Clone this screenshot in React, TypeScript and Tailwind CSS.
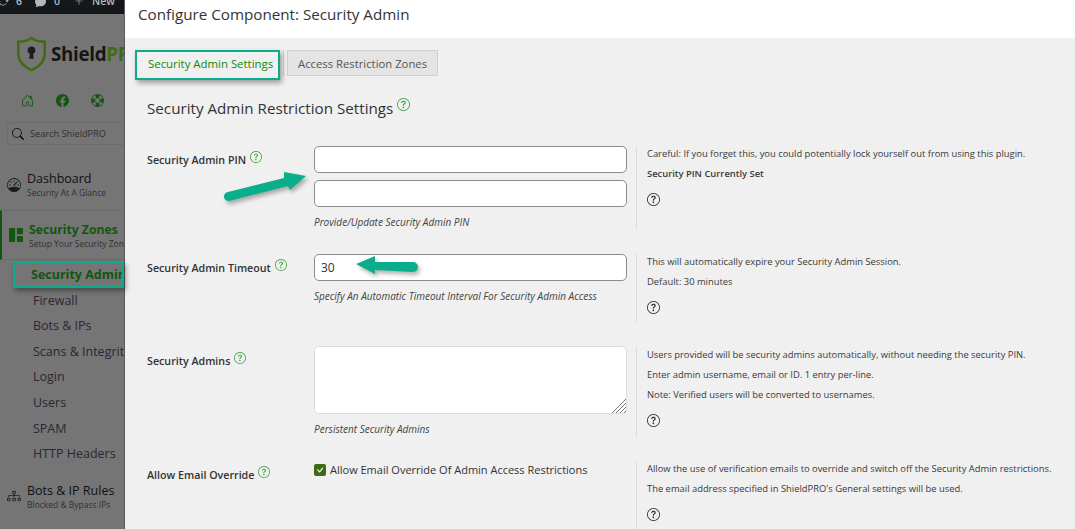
import {
  BsDiagram3,
  BsFacebook,
  BsGrid1X2Fill,
  BsHouseDoor,
  BsLifePreserver,
  BsPlusLg,
  BsQuestionCircle,
  BsSearch,
  BsSpeedometer,
  BsChatFill,
  BsArrowRepeat,
  BsCheck,
} from "react-icons/bs";

const subItems = ["Firewall", "Bots & IPs", "Scans & Integrity", "Login", "Users", "SPAM", "HTTP Headers"];

function Shield() {
  return (
    <svg viewBox="0 0 32 38" className="h-[36px] w-[31px] shrink-0">
      <path
        d="M16 2 C20 5 25 6 30 6 L30 18 C30 27 23 33 16 36 C9 33 2 27 2 18 L2 6 C7 6 12 5 16 2 Z"
        fill="none"
        stroke="#3f6b12"
        strokeWidth="2.6"
      />
      <circle cx="16" cy="15" r="4" fill="#1c1c1c" />
      <path d="M14.6 17 h2.8 l1 7 h-4.8 Z" fill="#1c1c1c" />
    </svg>
  );
}

function Sidebar() {
  return (
    <aside className="flex h-full w-[125px] shrink-0 flex-col overflow-hidden border-r border-[#5a5a5a] bg-[#757575] font-['Open_Sans',sans-serif]">
      <div className="flex h-[14px] shrink-0 items-end overflow-hidden bg-[#14181b] text-[10.5px] font-semibold leading-[18px] whitespace-nowrap text-[#b5b8ba]">
        <div className="flex translate-y-[-4px] items-center">
          <BsArrowRepeat className="ml-[-3px] w-[12px] shrink-0 text-[12px]" />
          <span className="ml-[7px] w-[19px]">6</span>
          <BsChatFill className="w-[11px] shrink-0 text-[11px]" />
          <span className="ml-[8px] w-[20px]">0</span>
          <BsPlusLg className="w-[10px] shrink-0 text-[10px]" />
          <span className="ml-[8px]">New</span>
          <span className="ml-[12px]">S</span>
        </div>
      </div>

      <div className="mt-[22px] ml-[16px] flex w-[140px] items-center gap-[4px]">
        <Shield />
        <span className="text-[18.8px] font-bold tracking-[-0.3px] text-[#161616]">
          Shield<span className="text-[#3f6b12]">PRO</span>
        </span>
      </div>

      <div className="mt-[22px] ml-[21px] flex gap-[22px] text-[13px] text-[#14560f]">
        <BsHouseDoor />
        <BsFacebook />
        <BsLifePreserver />
      </div>

      <div className="mt-[15px] ml-[7px] flex h-[23px] w-[130px] items-center gap-[6px] rounded-l-[4px] border border-[#6c6c6c] pl-[4px] text-[#111]">
        <BsSearch className="text-[12px]" />
        <span className="text-[9.2px] text-[#303030]">Search ShieldPRO</span>
      </div>

      <div className="mt-[25px] flex items-center whitespace-nowrap">
        <BsSpeedometer className="ml-[7px] shrink-0 text-[14px] text-[#1c1c1c]" />
        <div className="ml-[6px]">
          <div className="text-[12.5px] leading-[17px] text-[#111]">Dashboard</div>
          <div className="text-[8.5px] leading-[12px] text-[#303030]">Security At A Glance</div>
        </div>
      </div>

      <div className="mt-[11px] flex h-[50px] w-[130px] shrink-0 items-center border-y border-l-2 border-y-[#6c6c6c] border-l-[#14560f] whitespace-nowrap">
        <BsGrid1X2Fill className="ml-[7px] shrink-0 text-[14px] text-[#14560f]" />
        <div className="ml-[6px]">
          <div className="text-[12.2px] leading-[17px] font-bold text-[#14560f]">Security Zones</div>
          <div className="text-[8.5px] leading-[12px] text-[#303030]">Setup Your Security Zones</div>
        </div>
      </div>

      <div className="mt-[2px] flex flex-col pl-[33px] text-[12.5px] leading-[25.6px] whitespace-nowrap text-[#2c2634]">
        <span className="ml-[-2px] font-bold text-[#14560f]">Security Admin</span>
        {subItems.map((item) => (
          <span key={item}>{item}</span>
        ))}
      </div>

      <div className="mt-[15px] flex items-center whitespace-nowrap">
        <BsDiagram3 className="ml-[7px] shrink-0 text-[14px] text-[#1c1c1c]" />
        <div className="ml-[6px]">
          <div className="text-[12.5px] leading-[17px] text-[#111]">Bots &amp; IP Rules</div>
          <div className="text-[8.5px] leading-[12px] text-[#303030]">Blocked &amp; Bypass IPs</div>
        </div>
      </div>
    </aside>
  );
}

function Tip() {
  return <BsQuestionCircle className="ml-[4px] inline-block align-[1px] text-[12px] text-[#2f9e2f]" />;
}

type RowProps = {
  label: string;
  hint?: string;
  help: React.ReactNode[];
  height: string;
  children: React.ReactNode;
};

function Row({ label, hint, help, height, children }: RowProps) {
  return (
    <div className={`flex ${height}`}>
      <div className="w-[167px] shrink-0 pt-[5px] text-[10.7px] font-semibold text-[#333]">
        {label}
        <Tip />
      </div>
      <div className="w-[313px] shrink-0">
        {children}
        {hint && <p className="mt-[8px] text-[10px] leading-[14px] text-[#444] italic">{hint}</p>}
      </div>
      <div className="ml-[9px] flex-1 border-l border-[#dcdcdc] pt-px pl-[10px] text-[9.4px] text-[#3a3a3a]">
        {help.map((line, i) => (
          <p key={i} className="mb-[6px] leading-[14px] whitespace-nowrap">
            {line}
          </p>
        ))}
        <BsQuestionCircle className="mt-[12px] text-[13px] text-[#222]" />
      </div>
    </div>
  );
}

const inputClass = "block h-[27px] w-full rounded-[5px] border border-[#8c8c8c] bg-white px-[6px] text-[12px] text-[#333]";

function Modal() {
  return (
    <main className="flex h-full flex-1 flex-col overflow-hidden bg-[#f0f0f0] font-['Open_Sans',sans-serif]">
      <header className="flex h-[38px] shrink-0 items-start bg-white pt-[3px] pl-[13px] text-[15.2px] leading-[22px] text-[#333]">
        Configure Component: Security Admin
      </header>

      <div className="pl-[22px]">
        <div className="mt-[12px] flex items-stretch text-[11.4px] leading-[28px]">
          <div className="h-[26px] w-[137px] border-r border-[#d4d4d4] pl-[1px] whitespace-nowrap text-[#0c8a0c]">
            Security Admin Settings
          </div>
          <div className="ml-[3px] h-[26px] border border-[#d0d0d0] bg-[#e4e4e4] px-[10px] text-[11.3px] leading-[26px] text-[#555]">
            Access Restriction Zones
          </div>
        </div>

        <h2 className="mt-[21px] text-[15.2px] leading-[22px] text-[#333]">
          Security Admin Restriction Settings
          <BsQuestionCircle className="ml-[4px] inline-block align-[3px] text-[13px] text-[#2f9e2f]" />
        </h2>

        <div className="mt-[27px] flex flex-col gap-[24px]">
          <Row
            label="Security Admin PIN"
            hint="Provide/Update Security Admin PIN"
            height="h-[84px]"
            help={[
              "Careful: If you forget this, you could potentially lock yourself out from using this plugin.",
              <strong key="s" className="font-semibold">Security PIN Currently Set</strong>,
            ]}
          >
            <input type="text" className={inputClass} />
            <input type="text" className={`${inputClass} mt-[7px]`} />
          </Row>
          <Row
            label="Security Admin Timeout"
            hint="Specify An Automatic Timeout Interval For Security Admin Access"
            height="h-[69px]"
            help={["This will automatically expire your Security Admin Session.", "Default: 30 minutes"]}
          >
            <input type="text" defaultValue="30" className={inputClass} />
          </Row>
          <Row
            label="Security Admins"
            hint="Persistent Security Admins"
            height="h-[90px]"
            help={[
              "Users provided will be security admins automatically, without needing the security PIN.",
              "Enter admin username, email or ID. 1 entry per-line.",
              "Note: Verified users will be converted to usernames.",
            ]}
          >
            <div className="relative mt-[-1px]">
              <textarea className="block h-[68px] w-full resize-none rounded-[5px] border border-[#dcdcdc] bg-white" />
              <svg viewBox="0 0 14 14" className="absolute right-[1px] bottom-[1px] h-[14px] w-[14px]" stroke="#777" strokeWidth="1">
                <path d="M0 14 L14 0 M4 14 L14 4 M8 14 L14 8 M12 14 L14 12" />
              </svg>
            </div>
          </Row>
          <Row
            label="Allow Email Override"
            height="h-[80px]"
            help={[
              "Allow the use of verification emails to override and switch off the Security Admin restrictions.",
              "The email address specified in ShieldPRO's General settings will be used.",
            ]}
          >
            <label className="flex items-center gap-[4px] pt-[2px] text-[11px] leading-[14px] text-[#333]">
              <span className="flex h-[12px] w-[12px] items-center justify-center rounded-[2px] bg-[#3f6b12] text-[12px] text-white">
                <BsCheck />
              </span>
              Allow Email Override Of Admin Access Restrictions
            </label>
          </Row>
        </div>
      </div>
    </main>
  );
}

export default function App() {
  return (
    <div className="relative flex h-[529px] w-[1075px] overflow-hidden">
      <Sidebar />
      <Modal />

      {/* annotations drawn over the screenshot */}
      <div className="absolute top-[50px] left-[135px] h-[30px] w-[145px] border-2 border-[#0cab8c] shadow-[2px_3px_5px_rgba(0,0,0,0.35)]" />
      <div className="absolute top-[261px] left-[13px] h-[27px] w-[111px] border-2 border-[#0cab8c] shadow-[2px_3px_5px_rgba(0,0,0,0.35)]" />
      <svg className="absolute top-0 left-0 h-[529px] w-[1075px] drop-shadow-[2px_3px_2px_rgba(0,0,0,0.3)]" viewBox="0 0 1075 529" fill="#0aae8c">
        <path d="M228 192 L284 178 L284 172 L306 176 L290 190 L288 186 L229 201 A4.5 4.5 0 0 1 228 192 Z" />
        <path d="M413 262 L375 262 L375 256 L356 264 L375 274 L375 270 L413 272 A5 5 0 0 0 413 262 Z" />
      </svg>
    </div>
  );
}
